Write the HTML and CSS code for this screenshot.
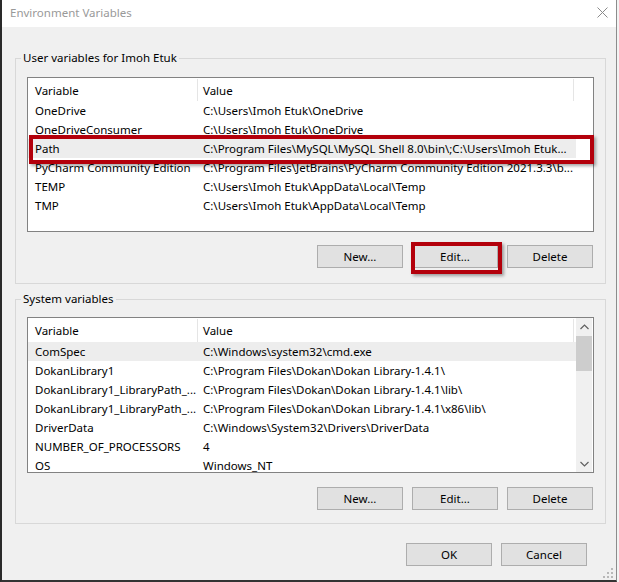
FILE: index.html
```html
<!DOCTYPE html>
<html>
<head>
<meta charset="utf-8">
<title>Environment Variables</title>
<link rel="stylesheet" href="styles.css">
</head>
<body>
<div class="window">
  <div class="titlebar">
    <span class="title">Environment Variables</span>
    <svg class="close" width="11" height="11" viewBox="0 0 11 11"><path d="M0.5 0.5 L10.5 10.5 M10.5 0.5 L0.5 10.5" stroke="#8a8a8a" stroke-width="1" fill="none"/></svg>
  </div>
  <div class="content">
    <fieldset class="group group-user">
      <legend class="group-label">User variables for Imoh Etuk</legend>
      <div class="list">
        <div class="table">
          <div class="row head">
            <div class="cell c1">Variable</div>
            <div class="cell c2">Value</div>
          </div>
          <div class="row"><div class="cell c1">OneDrive</div><div class="cell c2">C:\Users\Imoh Etuk\OneDrive</div></div>
          <div class="row"><div class="cell c1">OneDriveConsumer</div><div class="cell c2">C:\Users\Imoh Etuk\OneDrive</div></div>
          <div class="row selected marked"><div class="cell c1">Path</div><div class="cell c2">C:\Program Files\MySQL\MySQL Shell 8.0\bin\;C:\Users\Imoh Etuk...</div></div>
          <div class="row"><div class="cell c1">PyCharm Community Edition</div><div class="cell c2">C:\Program Files\JetBrains\PyCharm Community Edition 2021.3.3\b...</div></div>
          <div class="row"><div class="cell c1">TEMP</div><div class="cell c2">C:\Users\Imoh Etuk\AppData\Local\Temp</div></div>
          <div class="row"><div class="cell c1">TMP</div><div class="cell c2">C:\Users\Imoh Etuk\AppData\Local\Temp</div></div>
        </div>
      </div>
      <div class="buttons">
        <button class="btn">New...</button>
        <button class="btn marked-btn">Edit...</button>
        <button class="btn">Delete</button>
      </div>
    </fieldset>

    <fieldset class="group group-system">
      <legend class="group-label">System variables</legend>
      <div class="list list-clip">
        <div class="table">
          <div class="row head head-tall">
            <div class="cell c1">Variable</div>
            <div class="cell c2">Value</div>
          </div>
          <div class="row selected"><div class="cell c1">ComSpec</div><div class="cell c2">C:\Windows\system32\cmd.exe</div></div>
          <div class="row"><div class="cell c1">DokanLibrary1</div><div class="cell c2">C:\Program Files\Dokan\Dokan Library-1.4.1\</div></div>
          <div class="row"><div class="cell c1">DokanLibrary1_LibraryPath_...</div><div class="cell c2">C:\Program Files\Dokan\Dokan Library-1.4.1\lib\</div></div>
          <div class="row"><div class="cell c1">DokanLibrary1_LibraryPath_...</div><div class="cell c2">C:\Program Files\Dokan\Dokan Library-1.4.1\x86\lib\</div></div>
          <div class="row"><div class="cell c1">DriverData</div><div class="cell c2">C:\Windows\System32\Drivers\DriverData</div></div>
          <div class="row"><div class="cell c1">NUMBER_OF_PROCESSORS</div><div class="cell c2">4</div></div>
          <div class="row"><div class="cell c1">OS</div><div class="cell c2">Windows_NT</div></div>
        </div>
        <div class="scrollbar">
          <div class="arrow"><svg width="9" height="6" viewBox="0 0 9 6"><polyline points="0.5,5 4.5,1 8.5,5" fill="none" stroke="#606060" stroke-width="1.2"/></svg></div>
          <div class="thumb"></div>
          <div class="track"></div>
          <div class="arrow"><svg width="9" height="6" viewBox="0 0 9 6"><polyline points="0.5,1 4.5,5 8.5,1" fill="none" stroke="#606060" stroke-width="1.2"/></svg></div>
        </div>
      </div>
      <div class="buttons buttons-system">
        <button class="btn">New...</button>
        <button class="btn">Edit...</button>
        <button class="btn">Delete</button>
      </div>
    </fieldset>

    <div class="footer">
      <button class="btn">OK</button>
      <button class="btn">Cancel</button>
    </div>
  </div>
  <svg class="grip" width="12" height="12" viewBox="0 0 12 12">
    <rect x="9" y="1" width="2" height="2" fill="#b8b8b8"/>
    <rect x="5" y="5" width="2" height="2" fill="#b8b8b8"/>
    <rect x="9" y="5" width="2" height="2" fill="#b8b8b8"/>
    <rect x="1" y="9" width="2" height="2" fill="#b8b8b8"/>
    <rect x="5" y="9" width="2" height="2" fill="#b8b8b8"/>
    <rect x="9" y="9" width="2" height="2" fill="#b8b8b8"/>
  </svg>
</div>
</body>
</html>
```
FILE: styles.css
```css
* { box-sizing: border-box; }
html, body {
  margin: 0;
  padding: 0;
  background: #f3f3f3;
}
body {
  width: 619px;
  height: 582px;
  overflow: hidden;
  font-family: "Noto Sans", "Open Sans", sans-serif;
  font-size: 11.5px;
  color: #000;
}
.window {
  position: relative;
  width: 617px;
  height: 582px;
  border-left: 2px solid #2a2a2a;
  border-right: 1px solid #8c8c8c;
  border-bottom: 2px solid #333;
  background: #f0f0f0;
  display: flex;
  flex-direction: column;
}
.titlebar {
  height: 27px;
  flex: none;
  background: #fff;
  display: flex;
  align-items: center;
  justify-content: space-between;
  padding: 0 8px 2px 8px;
}
.title {
  color: #999;
  font-size: 11.5px;
}
.close { display: block; }
.content {
  flex: 1;
  padding: 23px 10px 0 13px;
  display: flex;
  flex-direction: column;
}
.group {
  margin: 0;
  border: 1px solid #d8d8d8;
  padding: 11px 11px 15px 11px;
  width: 591px;
  min-width: 0;
}
.group-system {
  margin-top: 7px;
  padding-top: 10px;
  padding-bottom: 13px;
}
.group-label {
  padding: 0 2px;
  margin-left: -6px;
  line-height: 16px;
  height: 16px;
}
.list {
  width: 567px;
  height: 155px;
  border: 1px solid #828282;
  background: #fff;
  display: flex;
}
.list-clip {
  height: 156px;
  overflow: hidden;
}
.table {
  width: 548px;
  flex: none;
}
.row {
  display: flex;
  height: 19px;
  line-height: 19px;
  position: relative;
  white-space: nowrap;
}
.row.head {
  height: 23px;
  line-height: 23px;
  padding-top: 1px;
}
.row.head-tall {
  height: 24px;
  line-height: 24px;
  padding-top: 1px;
}
.cell { overflow: hidden; }
.c1 {
  width: 170px;
  padding-left: 7px;
  flex: none;
}
.c2 {
  width: 376px;
  padding-left: 5px;
  flex: none;
}
.head .c1, .head .c2 {
  border-right: 1px solid #e5e5e5;
}
.row.selected { background: #ededed; }
.marked::after {
  content: "";
  position: absolute;
  top: -4px;
  bottom: -6px;
  left: 1px;
  right: -18px;
  border: 4px solid #b3000b;
  box-shadow: 2px 2px 3px rgba(0,0,0,0.35);
  pointer-events: none;
}
.scrollbar {
  width: 16px;
  flex: none;
  background: #f0f0f0;
  display: flex;
  flex-direction: column;
}
.arrow {
  height: 17px;
  display: flex;
  align-items: center;
  justify-content: center;
  flex: none;
}
.thumb {
  height: 35px;
  margin-top: 1px;
  background: #cdcdcd;
  flex: none;
}
.track { flex: 1; }
.buttons {
  margin-top: 13px;
  display: flex;
  justify-content: flex-end;
  gap: 9px;
  padding-right: 1px;
}
.buttons-system { margin-top: 14px; }
.btn {
  width: 86px;
  height: 23px;
  background: #e1e1e1;
  border: 1px solid #adadad;
  font-family: inherit;
  font-size: 11.5px;
  color: #000;
  padding: 0;
  margin: 0;
  line-height: 20px;
  border-radius: 0;
}
.marked-btn { position: relative; }
.marked-btn::after {
  content: "";
  position: absolute;
  top: -4px;
  left: -2px;
  right: -5px;
  bottom: -7px;
  border: 4px solid #b3000b;
  box-shadow: 2px 2px 3px rgba(0,0,0,0.35);
}
.footer {
  margin-top: 19px;
  display: flex;
  justify-content: flex-end;
  gap: 9px;
  padding-right: 19px;
}
.grip {
  position: absolute;
  right: 2px;
  bottom: 1px;
}
```
